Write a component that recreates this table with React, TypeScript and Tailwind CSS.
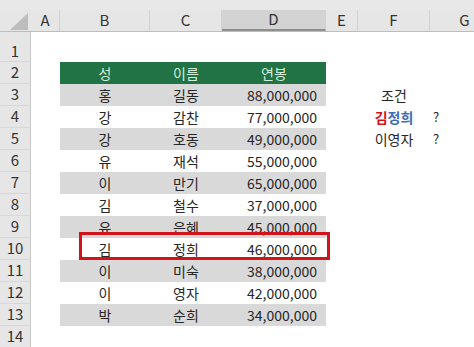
import React from "react";

const COLS = [
  { key: "A", w: 29 },
  { key: "B", w: 90 },
  { key: "C", w: 72 },
  { key: "D", w: 104 },
  { key: "E", w: 32 },
  { key: "F", w: 72 },
  { key: "G", w: 70 },
];

const data: [string, string, string][] = [
  ["홍", "길동", "88,000,000"],
  ["강", "감찬", "77,000,000"],
  ["강", "호동", "49,000,000"],
  ["유", "재석", "55,000,000"],
  ["이", "만기", "65,000,000"],
  ["김", "철수", "37,000,000"],
  ["유", "은혜", "45,000,000"],
  ["김", "정희", "46,000,000"],
  ["이", "미숙", "38,000,000"],
  ["이", "영자", "42,000,000"],
  ["박", "순희", "34,000,000"],
];

function RowHead({ n, h = 22, pt = 0 }: { n: number; h?: number; pt?: number }) {
  return (
    <div
      className="w-[31px] shrink-0 bg-[#e6e6e6] border-r border-[#c9c9c9] border-b border-b-[#d8d8d8] flex items-center justify-center text-[15px] text-[#333]"
      style={{ height: h, paddingTop: pt }}
    >
      {n}
    </div>
  );
}

export default function App() {
  const font = { fontFamily: '"Noto Sans CJK KR", "Noto Sans", sans-serif' };
  return (
    <div className="relative w-[474px] h-[347px] overflow-hidden bg-white text-[#262626]" style={font}>
      {/* top strip */}
      <div className="h-[10px] bg-[#e8e8e8]" />
      {/* column header */}
      <div className="flex h-[22px] bg-[#e6e6e6] border-b border-[#bdbdbd]">
        <div className="w-[31px] shrink-0 relative">
          <svg width="31" height="22" viewBox="0 0 31 22" className="absolute left-0 top-0">
            <polygon points="10,20 28,20 28,3" fill="#bdbdbd" />
          </svg>
        </div>
        {COLS.map((c) => (
          <div
            key={c.key}
            className={
              "shrink-0 flex items-center justify-center text-[15px] text-[#333] border-r border-[#d2d2d2] " +
              (c.key === "D" ? "bg-[#d3d3d3] border-b-2 border-b-[#8e8e8e]" : "")
            }
            style={{ width: c.w }}
          >
            {c.key}
          </div>
        ))}
      </div>
      {/* row 1 */}
      <div className="flex">
        <RowHead n={1} h={30} pt={10} />
      </div>
      {/* row 2 header */}
      <div className="flex">
        <RowHead n={2} />
        <div className="w-[29px] shrink-0" />
        <div className="flex h-[22px] bg-[#217346] text-[14px] text-[#d2efda]">
          <div className="w-[90px] flex items-center justify-center">성</div>
          <div className="w-[72px] flex items-center justify-center">이름</div>
          <div className="w-[104px] flex items-center justify-center">연봉</div>
        </div>
      </div>
      {data.map((r, i) => {
        const n = i + 3;
        const gray = i % 2 === 0;
        return (
          <div className="flex" key={n}>
            <RowHead n={n} />
            <div className="w-[29px] shrink-0" />
            <div className={"flex h-[22px] text-[14px] " + (gray ? "bg-[#d9d9d9]" : "bg-white")}>
              <div className="w-[90px] flex items-center justify-center">{r[0]}</div>
              <div className="w-[72px] flex items-center justify-center">{r[1]}</div>
              <div className="w-[104px] flex items-center justify-end pr-[9px]">{r[2]}</div>
            </div>
            <div className="w-[32px] shrink-0" />
            <div className="w-[72px] shrink-0 flex items-center justify-center text-[14px]">
              {n === 3 && <span>조건</span>}
              {n === 4 && (
                <span className="font-bold">
                  <span className="text-[#d0161b]">김</span>
                  <span className="text-[#3d6cb5]">정희</span>
                </span>
              )}
              {n === 5 && <span>이영자</span>}
            </div>
            <div className="w-[70px] shrink-0 flex items-center pl-[3px] text-[13px]">
              {(n === 4 || n === 5) && "?"}
            </div>
          </div>
        );
      })}
      <div className="flex">
        <RowHead n={14} />
      </div>
      {/* highlight box */}
      <div className="absolute left-[79px] top-[232px] w-[251px] h-[28px] border-[3px] border-[#d3131a]" />
    </div>
  );
}
